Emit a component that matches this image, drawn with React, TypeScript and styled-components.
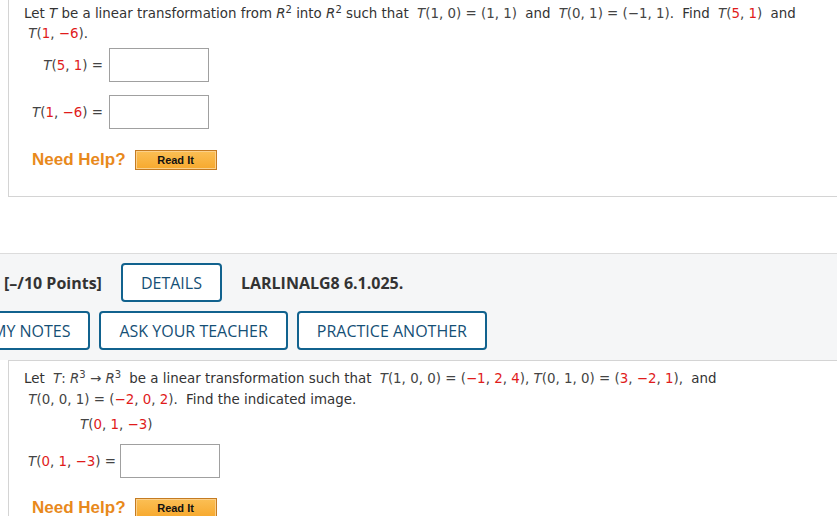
import React from 'react';
import styled, { createGlobalStyle } from 'styled-components';

const GlobalStyle = createGlobalStyle`
  html, body {
    margin: 0;
    padding: 0;
    background: #ffffff;
    overflow: hidden;
  }
  body {
    width: 837px;
    height: 516px;
  }
`;

const Page = styled.div`
  width: 837px;
  height: 516px;
  overflow: hidden;
`;

const QuestionCard = styled.div<{ $top?: boolean }>`
  margin-left: 8px;
  margin-top: ${({ $top }) => ($top ? '-1px' : '0')};
  width: 900px;
  background: #fff;
  border: 1px solid #d4d4d4;
  padding: ${({ $top }) => ($top ? '4px 15px 26px' : '7px 15px 20px')};
  box-sizing: border-box;
  font-family: 'DejaVu Sans', Verdana, sans-serif;
  font-size: 13.4px;
  color: #333;
`;

const Line = styled.div<{ $lh?: number }>`
  line-height: ${({ $lh }) => $lh ?? 20}px;
  white-space: nowrap;
`;

const M = styled.span`
  font-family: 'DejaVu Sans', Verdana, sans-serif;
  color: #444;
`;

const It = styled.i`
  font-style: italic;
`;

const Red = styled.span`
  color: #e01b1b;
`;

const Sup = styled.sup`
  font-size: 10px;
  line-height: 0;
  vertical-align: 5px;
`;

const Gap = styled.span`
  display: inline-block;
  width: 4px;
`;

const AnswerGrid = styled.div`
  display: grid;
  grid-template-columns: 79px auto;
  column-gap: 6px;
  row-gap: 13px;
  align-items: center;
  margin-top: 4px;
`;

const AnswerLabel = styled.div`
  justify-self: end;
  white-space: nowrap;
`;

const AnswerRow = styled.div<{ $indent: number }>`
  display: flex;
  align-items: center;
  gap: 4px;
  padding-left: ${({ $indent }) => $indent}px;
  margin-top: 9px;
`;

const AnswerBox = styled.div`
  width: 98px;
  height: 32px;
  border: 1px solid #a0a0a0;
  background: #fff;
`;

const Centered = styled.div`
  padding-left: 56px;
  margin-top: 5px;
  line-height: 20px;
`;

const HelpRow = styled.div<{ $top: number }>`
  display: flex;
  align-items: center;
  gap: 9px;
  margin-top: ${({ $top }) => $top}px;
  padding-left: 8px;
`;

const NeedHelp = styled.span`
  font-family: 'Liberation Sans', Arial, sans-serif;
  font-weight: bold;
  font-size: 17px;
  color: #e8891c;
`;

const ReadIt = styled.button`
  width: 82px;
  height: 20px;
  padding: 0;
  border: 1px solid #c47b22;
  box-shadow: inset 0 0 0 1px #fcd08a;
  background: linear-gradient(#fbbf55, #f7a92e);
  font-family: 'Liberation Sans', Arial, sans-serif;
  font-weight: bold;
  font-size: 11px;
  color: #111;
`;

const Spacer = styled.div`
  height: 56px;
`;

const HeaderBand = styled.div`
  background: #f5f6f7;
  border-top: 1px solid #dcdcdc;
  height: 107px;
  padding-top: 9px;
  box-sizing: border-box;
  font-family: 'Open Sans', sans-serif;
  color: #333;
`;

const HeaderRow = styled.div<{ $shift: number }>`
  display: flex;
  align-items: center;
  gap: 9px;
  margin-left: ${({ $shift }) => $shift}px;
  margin-bottom: 9px;
  white-space: nowrap;
`;

const Points = styled.span`
  font-weight: 700;
  font-size: 16px;
  margin-right: 10px;
`;

const Code = styled.span`
  font-weight: 700;
  font-size: 16px;
  margin-left: 10px;
`;

const OutlineButton = styled.button`
  height: 39px;
  padding: 0 18px;
  border: 2px solid #11628e;
  border-radius: 4px;
  background: #fff;
  font-family: 'Open Sans', sans-serif;
  font-size: 16px;
  font-weight: 500;
  color: #154f76;
  white-space: nowrap;
  flex-shrink: 0;
`;

export default function App() {
  return (
    <Page>
      <GlobalStyle />
      <QuestionCard $top>
        <Line>
          Let <It>T</It> be a linear transformation from <It>R</It>
          <Sup>2</Sup> into <It>R</It>
          <Sup>2</Sup> such that <Gap />
          <M>
            <It>T</It>(1, 0) = (1, 1)
          </M>
          <Gap /> and <Gap />
          <M>
            <It>T</It>(0, 1) = (−1, 1)
          </M>
          . <Gap />
          Find <Gap />
          <M>
            <It>T</It>(<Red>5</Red>, <Red>1</Red>)
          </M>
          <Gap /> and
        </Line>
        <Line>
          &nbsp;<M>
            <It>T</It>(<Red>1</Red>, <Red>−6</Red>)
          </M>
          .
        </Line>
        <AnswerGrid>
          <AnswerLabel>
            <M>
              <It>T</It>(<Red>5</Red>, <Red>1</Red>) =
            </M>
          </AnswerLabel>
          <AnswerBox />
          <AnswerLabel>
            <M>
              <It>T</It>(<Red>1</Red>, <Red>−6</Red>) =
            </M>
          </AnswerLabel>
          <AnswerBox />
        </AnswerGrid>
        <HelpRow $top={21}>
          <NeedHelp>Need Help?</NeedHelp>
          <ReadIt>Read It</ReadIt>
        </HelpRow>
      </QuestionCard>

      <Spacer />

      <HeaderBand>
        <HeaderRow $shift={4}>
          <Points>[–/10 Points]</Points>
          <OutlineButton>DETAILS</OutlineButton>
          <Code>LARLINALG8 6.1.025.</Code>
        </HeaderRow>
        <HeaderRow $shift={-28}>
          <OutlineButton>MY NOTES</OutlineButton>
          <OutlineButton>ASK YOUR TEACHER</OutlineButton>
          <OutlineButton>PRACTICE ANOTHER</OutlineButton>
        </HeaderRow>
      </HeaderBand>

      <QuestionCard>
        <Line $lh={21}>
          Let <Gap />
          <M>
            <It>T</It>: <It>R</It>
            <Sup>3</Sup> → <It>R</It>
            <Sup>3</Sup>
          </M>
          <Gap /> be a linear transformation such that <Gap />
          <M>
            <It>T</It>(1, 0, 0) = (<Red>−1</Red>, <Red>2</Red>, <Red>4</Red>), <It>T</It>(0, 1, 0) = (
            <Red>3</Red>, <Red>−2</Red>, <Red>1</Red>),
          </M>
          <Gap /> and
        </Line>
        <Line $lh={21}>
          &nbsp;<M>
            <It>T</It>(0, 0, 1) = (<Red>−2</Red>, <Red>0</Red>, <Red>2</Red>)
          </M>
          . <Gap />
          Find the indicated image.
        </Line>
        <Centered>
          <M>
            <It>T</It>(<Red>0</Red>, <Red>1</Red>, <Red>−3</Red>)
          </M>
        </Centered>
        <AnswerRow $indent={4}>
          <M>
            <It>T</It>(<Red>0</Red>, <Red>1</Red>, <Red>−3</Red>) =
          </M>
          <AnswerBox />
        </AnswerRow>
        <HelpRow $top={20}>
          <NeedHelp>Need Help?</NeedHelp>
          <ReadIt>Read It</ReadIt>
        </HelpRow>
      </QuestionCard>
    </Page>
  );
}
